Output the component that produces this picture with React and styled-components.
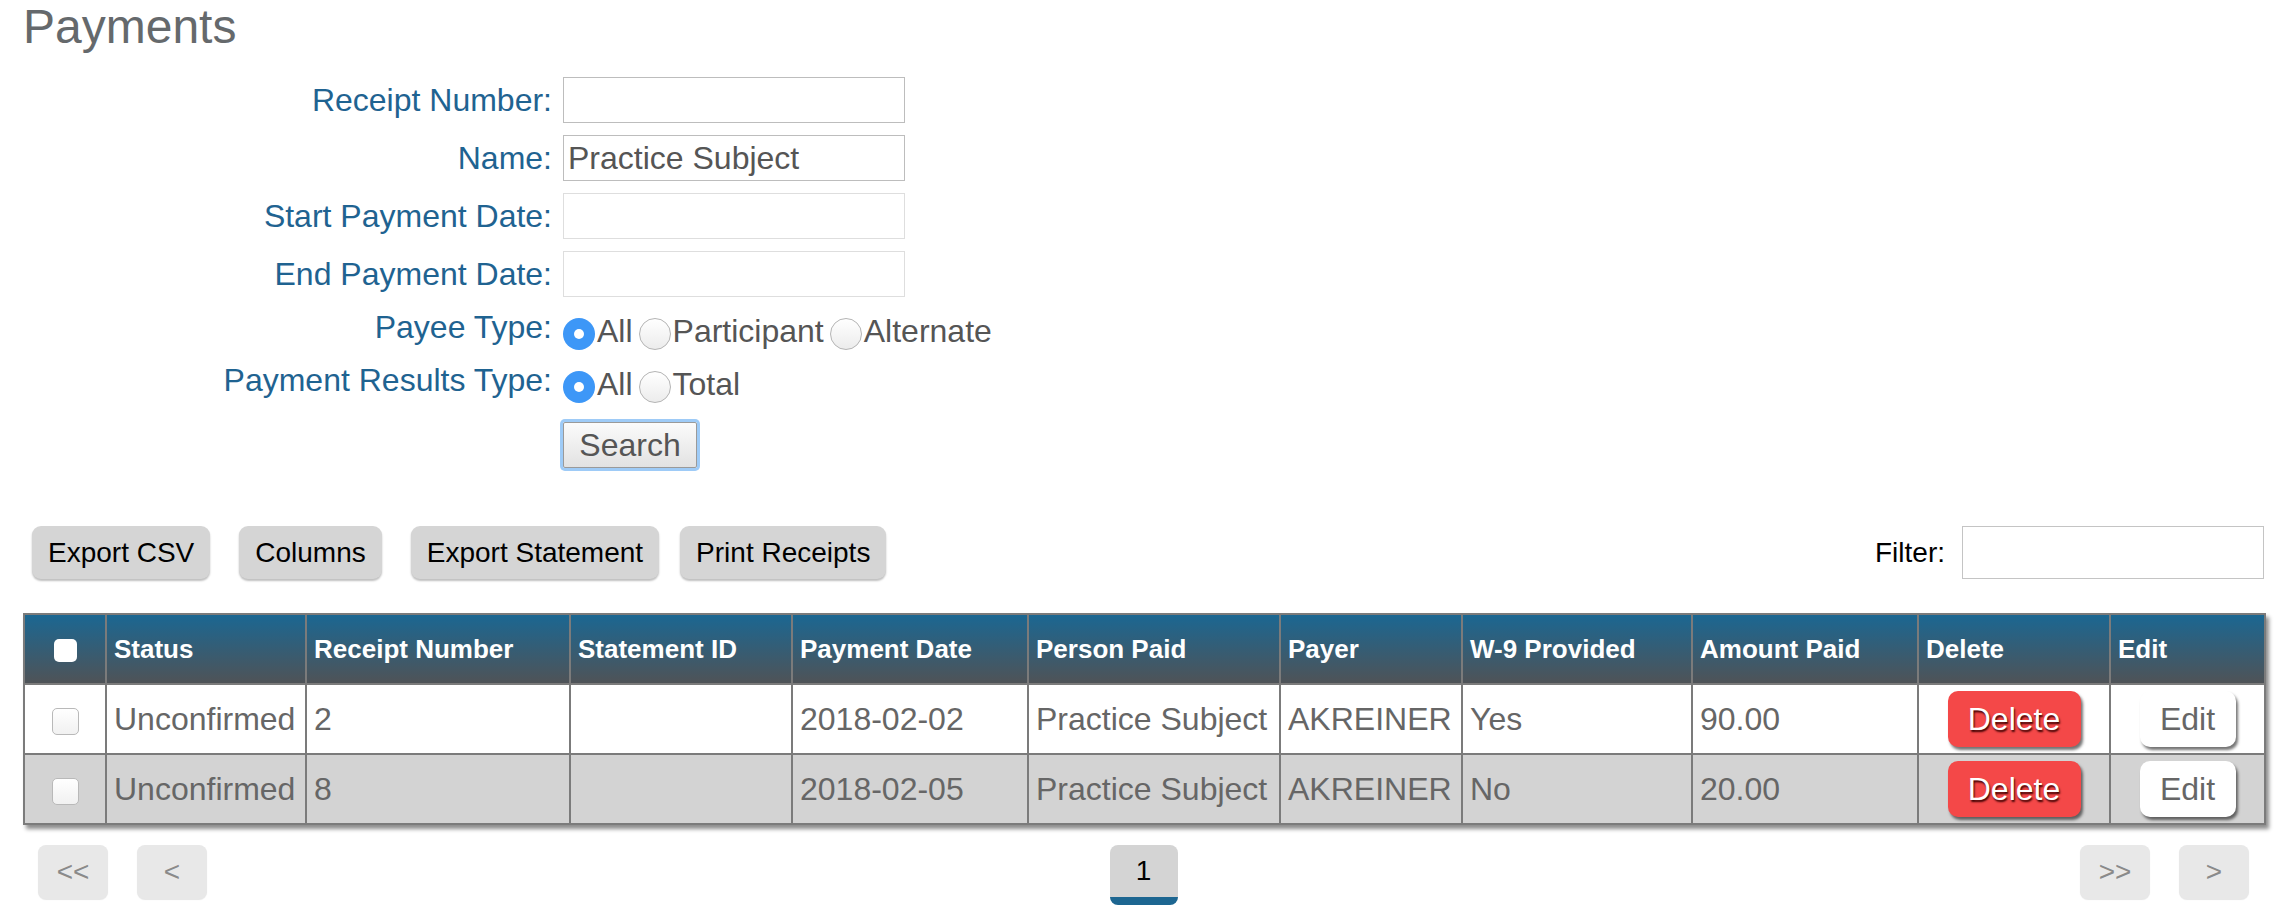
import styled, { createGlobalStyle } from "styled-components";

const GlobalStyle = createGlobalStyle`
  body {
    margin: 0;
    background: #fff;
    font-family: "Liberation Sans", Arial, Helvetica, sans-serif;
  }
`;

const Page = styled.div`
  padding: 1px 24px 0 23px;
`;

const PageTitle = styled.h1`
  margin: 0;
  font-size: 48px;
  line-height: 52px;
  font-weight: normal;
  color: #65696c;
`;

const SearchForm = styled.form`
  display: grid;
  grid-template-columns: 529px auto;
  column-gap: 11px;
  row-gap: 12px;
  margin-top: 24px;
`;

const FieldLabel = styled.label`
  text-align: right;
  color: #1f6391;
  font-size: 32px;
  line-height: ${(p) => (p.$compact ? "36px" : "46px")};
  white-space: nowrap;
`;

const TextInput = styled.input`
  box-sizing: border-box;
  width: 342px;
  height: 46px;
  padding: 0 4px;
  border: 1px solid ${(p) => (p.$light ? "#dedede" : "#bdbdbd")};
  font-family: inherit;
  font-size: 32px;
  color: #555;
  outline: none;
`;

const RadioGroup = styled.div`
  display: flex;
  align-items: flex-start;
`;

const RadioOption = styled.span`
  display: flex;
  align-items: flex-start;
  margin-right: 6px;
`;

const RadioDot = styled.span`
  position: relative;
  box-sizing: border-box;
  width: 32px;
  height: 32px;
  margin: 9px 2px 0 0;
  border-radius: 50%;
  border: ${(p) => (p.$checked ? "none" : "1px solid #b4b4b4")};
  background: ${(p) =>
    p.$checked ? "#3d97f7" : "linear-gradient(#ffffff, #ececec)"};

  &::after {
    content: "";
    display: ${(p) => (p.$checked ? "block" : "none")};
    position: absolute;
    left: 11px;
    top: 11px;
    width: 10px;
    height: 10px;
    border-radius: 50%;
    background: #fff;
  }
`;

const RadioText = styled.span`
  padding-top: 5px;
  font-size: 32px;
  line-height: 34px;
  color: #555;
`;

const SearchButton = styled.button`
  grid-column: 2;
  justify-self: start;
  width: 134px;
  height: 46px;
  margin-top: 7px;
  padding: 0;
  border: 1px solid #9a9a9a;
  border-radius: 2px;
  background: linear-gradient(#fbfbfb, #e2e2e2);
  box-shadow: 0 0 0 3px #9ecbf7;
  font-family: inherit;
  font-size: 32px;
  color: #555;
`;

const Toolbar = styled.div`
  display: flex;
  justify-content: space-between;
  align-items: center;
  margin-top: 58px;
`;

const ToolGroup = styled.div`
  display: flex;
  padding-left: 9px;
`;

const ToolButton = styled.button`
  height: 53px;
  margin-left: ${(p) => p.$gap || 0}px;
  padding: 0 16px;
  border: none;
  border-radius: 9px;
  background: #d5d5d5;
  box-shadow: 0 2px 2px rgba(0, 0, 0, 0.25);
  font-family: inherit;
  font-size: 28px;
  color: #000;
`;

const FilterBox = styled.div`
  display: flex;
  align-items: center;
`;

const FilterLabel = styled.label`
  margin-right: 17px;
  font-size: 28px;
  color: #000;
`;

const FilterInput = styled.input`
  box-sizing: border-box;
  width: 302px;
  height: 53px;
  border: 1px solid #c4c4c4;
  outline: none;
`;

const DataTable = styled.table`
  margin-top: 34px;
  width: 2241px;
  border-collapse: collapse;
  table-layout: fixed;
  box-shadow: 3px 4px 4px rgba(0, 0, 0, 0.45);
`;

const HeadCell = styled.th`
  height: 68px;
  padding: 0 7px;
  border: 2px solid #7b7b7b;
  background: linear-gradient(#1b6792, #4f5357);
  color: #fff;
  font-size: 26px;
  font-weight: bold;
  text-align: ${(p) => (p.$center ? "center" : "left")};
  white-space: nowrap;
  overflow: hidden;
`;

const Row = styled.tr`
  background: ${(p) => (p.$shade ? "#d3d3d3" : "#fff")};
`;

const Cell = styled.td`
  height: 68px;
  padding: 0 7px;
  border: 2px solid #7b7b7b;
  font-size: 32px;
  color: #666;
  text-align: ${(p) => (p.$center ? "center" : "left")};
  white-space: nowrap;
  overflow: hidden;
`;

const CheckBox = styled.span`
  display: inline-block;
  vertical-align: middle;
  box-sizing: border-box;
  width: ${(p) => p.$size}px;
  height: ${(p) => p.$size}px;
  border-radius: 5px;
  border: ${(p) => (p.$plain ? "none" : "1px solid #b9b9b9")};
  background: ${(p) => (p.$plain ? "#fff" : "linear-gradient(#ffffff, #f1f1f1)")};
`;

const ActionButton = styled.button`
  width: ${(p) => (p.$danger ? 133 : 96)}px;
  height: 56px;
  padding: 0;
  border: none;
  border-radius: 10px;
  background: ${(p) => (p.$danger ? "#f44848" : "#fff")};
  color: ${(p) => (p.$danger ? "#fff" : "#666")};
  text-shadow: ${(p) => (p.$danger ? "1px 2px 2px #3a0000" : "none")};
  box-shadow: 2px 3px 3px rgba(0, 0, 0, 0.55);
  font-family: inherit;
  font-size: 32px;
  vertical-align: middle;
`;

const Pagination = styled.div`
  display: flex;
  justify-content: space-between;
  align-items: flex-start;
  margin-top: 20px;
  padding: 0 15px;
`;

const PagerGroup = styled.div`
  display: flex;
  gap: 29px;
`;

const PagerButton = styled.button`
  width: 70px;
  height: 54px;
  padding: 0;
  border: none;
  border-radius: 8px;
  background: #e8e8e8;
  box-shadow: 0 1px 1px rgba(0, 0, 0, 0.1);
  font-family: inherit;
  font-size: 28px;
  color: #8a8a8a;
`;

const PageNumber = styled.button`
  box-sizing: border-box;
  width: 68px;
  height: 60px;
  padding: 0;
  border: none;
  border-bottom: 8px solid #1d6691;
  border-radius: 8px;
  background: #d4d4d4;
  font-family: inherit;
  font-size: 28px;
  color: #000;
`;

const columns = [
  { title: "", width: 82, center: true },
  { title: "Status", width: 200 },
  { title: "Receipt Number", width: 264 },
  { title: "Statement ID", width: 222 },
  { title: "Payment Date", width: 236 },
  { title: "Person Paid", width: 252 },
  { title: "Payer", width: 182 },
  { title: "W-9 Provided", width: 230 },
  { title: "Amount Paid", width: 226 },
  { title: "Delete", width: 192 },
  { title: "Edit", width: 155 },
];

const payments = [
  { status: "Unconfirmed", receipt: "2", statement: "", date: "2018-02-02", person: "Practice Subject", payer: "AKREINER", w9: "Yes", amount: "90.00" },
  { status: "Unconfirmed", receipt: "8", statement: "", date: "2018-02-05", person: "Practice Subject", payer: "AKREINER", w9: "No", amount: "20.00" },
];

const RadioSet = ({ options }) => (
  <RadioGroup>
    {options.map((opt, i) => (
      <RadioOption key={opt}>
        <RadioDot $checked={i === 0} />
        <RadioText>{opt}</RadioText>
      </RadioOption>
    ))}
  </RadioGroup>
);

const App = () => {
  return (
    <Page>
      <GlobalStyle />
      <PageTitle>Payments</PageTitle>

      <SearchForm onSubmit={(e) => e.preventDefault()}>
        <FieldLabel>Receipt Number:</FieldLabel>
        <TextInput />
        <FieldLabel>Name:</FieldLabel>
        <TextInput defaultValue="Practice Subject" />
        <FieldLabel>Start Payment Date:</FieldLabel>
        <TextInput $light />
        <FieldLabel>End Payment Date:</FieldLabel>
        <TextInput $light />
        <FieldLabel $compact>Payee Type:</FieldLabel>
        <RadioSet options={["All", "Participant", "Alternate"]} />
        <FieldLabel $compact>Payment Results Type:</FieldLabel>
        <RadioSet options={["All", "Total"]} />
        <SearchButton type="submit">Search</SearchButton>
      </SearchForm>

      <Toolbar>
        <ToolGroup>
          <ToolButton>Export CSV</ToolButton>
          <ToolButton $gap={29}>Columns</ToolButton>
          <ToolButton $gap={29}>Export Statement</ToolButton>
          <ToolButton $gap={21}>Print Receipts</ToolButton>
        </ToolGroup>
        <FilterBox>
          <FilterLabel>Filter:</FilterLabel>
          <FilterInput />
        </FilterBox>
      </Toolbar>

      <DataTable>
        <colgroup>
          {columns.map((c, i) => (
            <col key={i} style={{ width: c.width }} />
          ))}
        </colgroup>
        <thead>
          <tr>
            {columns.map((c, i) => (
              <HeadCell key={i} $center={c.center}>
                {i === 0 ? <CheckBox $size={23} $plain /> : c.title}
              </HeadCell>
            ))}
          </tr>
        </thead>
        <tbody>
          {payments.map((p, i) => (
            <Row key={p.receipt} $shade={i % 2 === 1}>
              <Cell $center>
                <CheckBox $size={27} />
              </Cell>
              <Cell>{p.status}</Cell>
              <Cell>{p.receipt}</Cell>
              <Cell>{p.statement}</Cell>
              <Cell>{p.date}</Cell>
              <Cell>{p.person}</Cell>
              <Cell>{p.payer}</Cell>
              <Cell>{p.w9}</Cell>
              <Cell>{p.amount}</Cell>
              <Cell $center>
                <ActionButton $danger>Delete</ActionButton>
              </Cell>
              <Cell $center>
                <ActionButton>Edit</ActionButton>
              </Cell>
            </Row>
          ))}
        </tbody>
      </DataTable>

      <Pagination>
        <PagerGroup>
          <PagerButton>&lt;&lt;</PagerButton>
          <PagerButton>&lt;</PagerButton>
        </PagerGroup>
        <PageNumber>1</PageNumber>
        <PagerGroup>
          <PagerButton>&gt;&gt;</PagerButton>
          <PagerButton>&gt;</PagerButton>
        </PagerGroup>
      </Pagination>
    </Page>
  );
};

export default App;
